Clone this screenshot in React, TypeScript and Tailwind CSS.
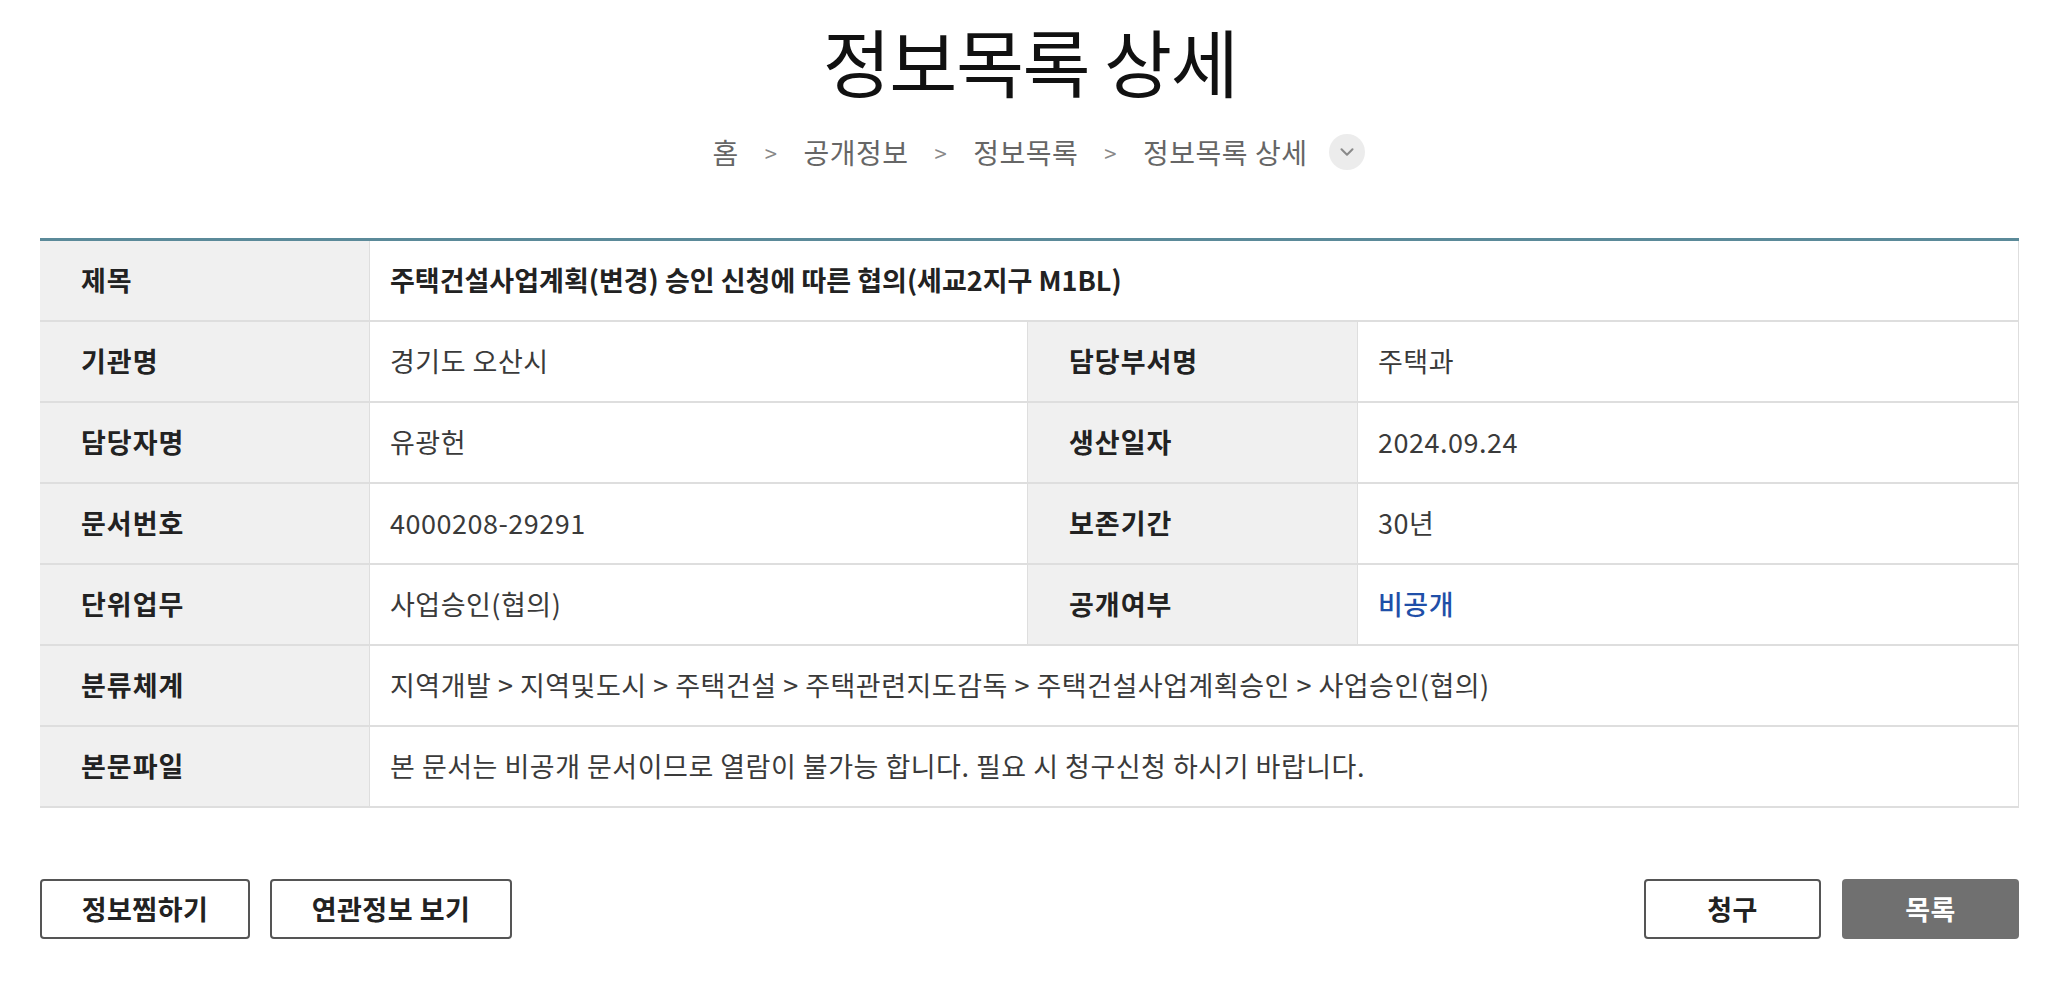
import { ChevronDown } from 'lucide-react'

const FONT = 'font-["Noto_Sans_CJK_KR","Noto_Sans",sans-serif]'

const CRUMBS = ['홈', '공개정보', '정보목록', '정보목록 상세']

type Row =
  | { kind: 'full'; label: string; value: string; bold?: boolean }
  | { kind: 'pair'; left: [string, string]; right: [string, string]; rightBlue?: boolean }

const ROWS: Row[] = [
  { kind: 'full', label: '제목', value: '주택건설사업계획(변경) 승인 신청에 따른 협의(세교2지구 M1BL)', bold: true },
  { kind: 'pair', left: ['기관명', '경기도 오산시'], right: ['담당부서명', '주택과'] },
  { kind: 'pair', left: ['담당자명', '유광헌'], right: ['생산일자', '2024.09.24'] },
  { kind: 'pair', left: ['문서번호', '4000208-29291'], right: ['보존기간', '30년'] },
  { kind: 'pair', left: ['단위업무', '사업승인(협의)'], right: ['공개여부', '비공개'], rightBlue: true },
  { kind: 'full', label: '분류체계', value: '지역개발 > 지역및도시 > 주택건설 > 주택관련지도감독 > 주택건설사업계획승인 > 사업승인(협의)' },
  { kind: 'full', label: '본문파일', value: '본 문서는 비공개 문서이므로 열람이 불가능 합니다. 필요 시 청구신청 하시기 바랍니다.' },
]

function Label({ children }: { children: string }) {
  return (
    <div className="w-[330px] shrink-0 h-full flex items-center pl-[41px] bg-[#f0f0f0] border-r border-[#dedede] text-[27px] tracking-[1px] font-bold text-[#222]">
      {children}
    </div>
  )
}

function Value({ children, className = '' }: { children: string; className?: string }) {
  return (
    <div className={`h-full flex items-center pl-[20px] text-[27px] tracking-[0.5px] ${className}`}>
      {children}
    </div>
  )
}

const BTN = 'h-[60px] rounded-[4px] text-[27px] tracking-[0.5px] font-bold'

export default function App() {
  return (
    <div className={`w-[2048px] h-[988px] bg-white ${FONT} text-[#333]`}>
      <h1 className="h-[120px] flex items-center justify-center pl-[12px] text-[74px] leading-none font-normal text-[#111] tracking-[-1.5px]">
        정보목록 상세
      </h1>

      <nav className="h-[60px] mt-[2px] flex items-center justify-center gap-[26px] pl-[30px] text-[28px] tracking-[0.5px] text-[#666]">
        {CRUMBS.map((c, i) => (
          <span key={c} className="flex items-center gap-[26px]">
            {i > 0 && <span className="text-[#888] text-[22px]">&gt;</span>}
            <span>{c}</span>
          </span>
        ))}
        <span className="ml-[-4px] w-[36px] h-[36px] rounded-full bg-[#ececec] flex items-center justify-center">
          <ChevronDown className="w-[22px] h-[22px] text-[#8a8a8a]" strokeWidth={2.25} />
        </span>
      </nav>

      <div className="ml-[40px] w-[1979px] mt-[56px]">
        <div className="border-t-[3px] border-t-[#5b8a99]">
          {ROWS.map((r, i) => (
            <div key={i} className="h-[81px] flex border-b-2 border-b-[#dedede] border-r border-r-[#dedede]">
              {r.kind === 'full' ? (
                <>
                  <Label>{r.label}</Label>
                  <Value className={r.bold ? 'font-bold text-[#222] tracking-[0px]' : 'text-[#3a3a3a]'}>{r.value}</Value>
                </>
              ) : (
                <>
                  <Label>{r.left[0]}</Label>
                  <div className="w-[658px] shrink-0 h-full border-r border-[#dedede]">
                    <Value className="text-[#3a3a3a]">{r.left[1]}</Value>
                  </div>
                  <Label>{r.right[0]}</Label>
                  <Value className={r.rightBlue ? 'text-[#1f4fa8] font-medium' : 'text-[#3a3a3a]'}>{r.right[1]}</Value>
                </>
              )}
            </div>
          ))}
        </div>

        <div className="mt-[71px] flex items-center">
          <button className={`${BTN} w-[210px] border-2 border-[#555] bg-white text-[#222]`}>정보찜하기</button>
          <button className={`${BTN} ml-[20px] w-[242px] border-2 border-[#555] bg-white text-[#222]`}>연관정보 보기</button>
          <button className={`${BTN} ml-auto w-[177px] border-2 border-[#555] bg-white text-[#222]`}>청구</button>
          <button className={`${BTN} ml-[21px] w-[177px] bg-[#707070] text-white`}>목록</button>
        </div>
      </div>
    </div>
  )
}
